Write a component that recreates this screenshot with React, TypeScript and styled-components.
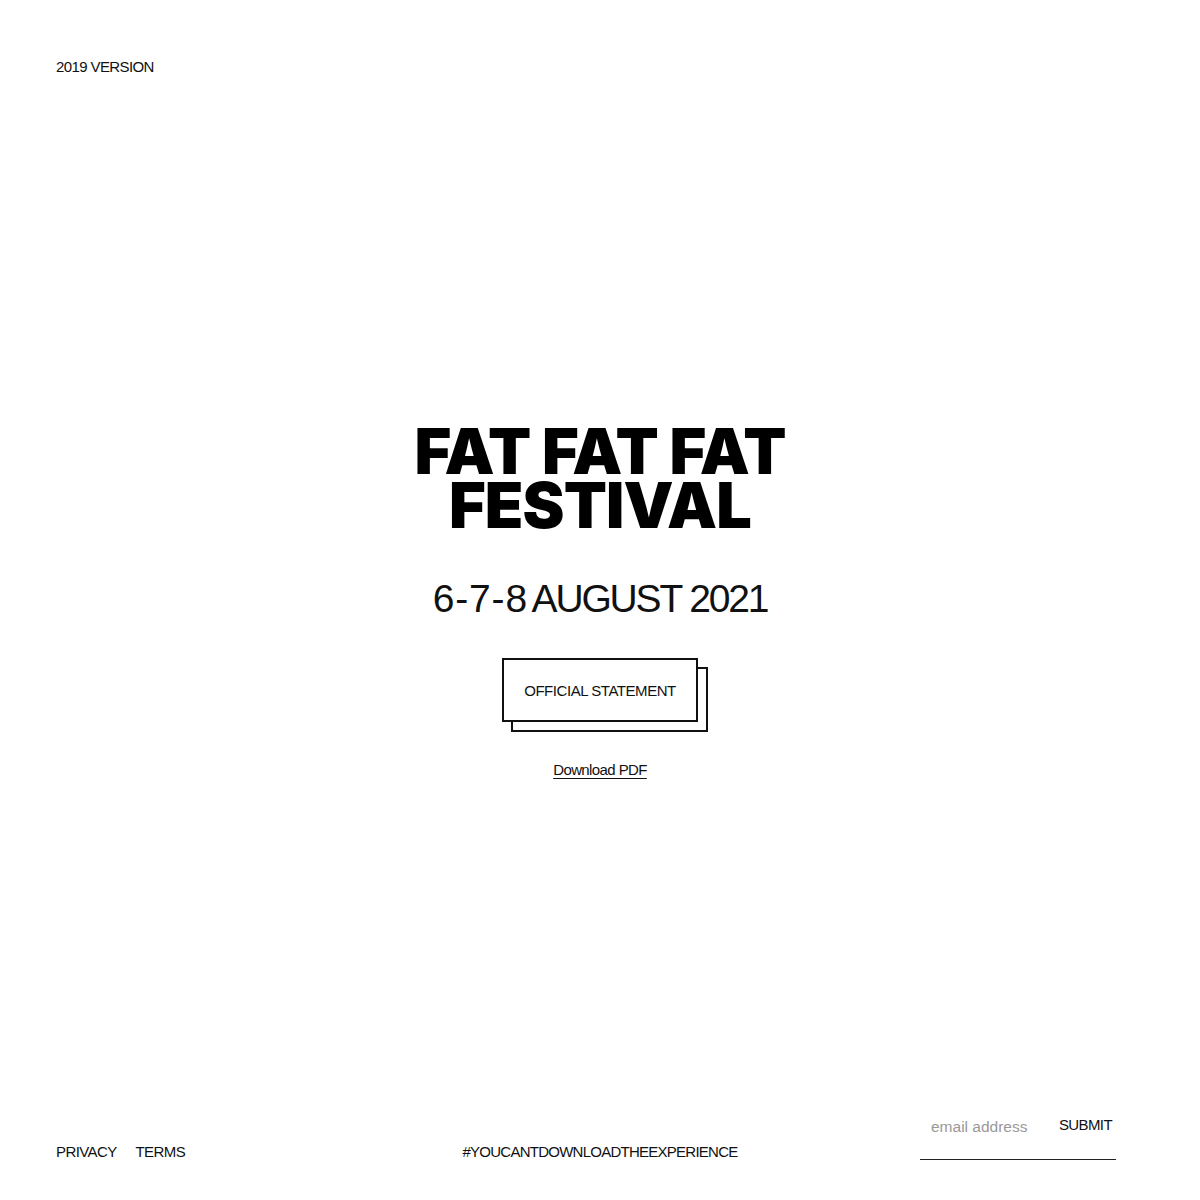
import React, {useState} from 'react';
import styled, {createGlobalStyle} from 'styled-components';

const GlobalStyle = createGlobalStyle`
    html, body {
        margin: 0;
        padding: 0;
        background: #ffffff;
    }
    body {
        font-family: "Liberation Sans", Arial, sans-serif;
        color: #111111;
        -webkit-font-smoothing: antialiased;
    }
    * {
        box-sizing: border-box;
    }
`;

const Page = styled.div`
    min-height: 100vh;
    display: flex;
    flex-direction: column;
`;

const Header = styled.header`
    padding: 57px 56px 0;
`;

const SmallLink = styled.a<{$underline?: boolean}>`
    font-size: 15px;
    line-height: 20px;
    letter-spacing: -0.04em;
    color: #111111;
    text-decoration: ${({$underline}) => ($underline ? 'underline' : 'none')};
    text-underline-offset: 3px;
    cursor: pointer;
`;

const Main = styled.main`
    flex: 1;
    display: flex;
    flex-direction: column;
    align-items: center;
    justify-content: center;
    padding-top: 10px;
`;

const Title = styled.h1`
    margin: 0;
    font-family: Inter, "Liberation Sans", sans-serif;
    font-weight: 900;
    font-size: 63px;
    line-height: 54px;
    letter-spacing: -0.014em;
    text-align: center;
    color: #000000;
`;

const Dates = styled.h2`
    margin: 45px 0 0;
    font-weight: 400;
    font-size: 39px;
    line-height: 44px;
    letter-spacing: -0.055em;
    color: #111111;
`;

const Dash = styled.span`
    margin: 0 3px;
`;

const StatementWrap = styled.div`
    position: relative;
    margin-top: 37px;
`;

const StatementShadow = styled.div`
    position: absolute;
    left: 9px;
    top: 9px;
    right: -10px;
    bottom: -10px;
    border: 2px solid #111111;
    background: #ffffff;
`;

const StatementButton = styled.button`
    position: relative;
    display: block;
    width: 196px;
    height: 64px;
    border: 2px solid #111111;
    background: #ffffff;
    font-family: "Liberation Sans", Arial, sans-serif;
    font-size: 15px;
    letter-spacing: -0.03em;
    color: #111111;
    cursor: pointer;
`;

const DownloadRow = styled.div`
    margin-top: 38px;
`;

const Footer = styled.footer`
    display: grid;
    grid-template-columns: 1fr auto 1fr;
    align-items: end;
    padding: 0 56px 38px;
`;

const FooterLinks = styled.nav`
    display: flex;
    gap: 19px;
`;

const Hashtag = styled.span`
    font-size: 15px;
    line-height: 20px;
    letter-spacing: -0.05em;
    color: #111111;
`;

const SignupForm = styled.form`
    justify-self: end;
    margin-right: 28px;
    margin-bottom: 2px;
    width: 196px;
    display: flex;
    align-items: center;
    justify-content: space-between;
    padding: 0 4px 22px 11px;
    border-bottom: 1.5px solid #222222;
`;

const EmailInput = styled.input`
    width: 110px;
    border: none;
    outline: none;
    padding: 0;
    font-family: "Liberation Sans", Arial, sans-serif;
    font-size: 15.5px;
    line-height: 20px;
    color: #111111;
    background: transparent;
    &::placeholder {
        color: #999999;
    }
`;

const SubmitButton = styled.button`
    border: none;
    background: transparent;
    padding: 0;
    margin-top: -4px;
    font-family: "Liberation Sans", Arial, sans-serif;
    font-size: 15px;
    line-height: 20px;
    letter-spacing: -0.04em;
    color: #111111;
    cursor: pointer;
`;

export default function App() {
    const [email, setEmail] = useState('');

    const handleSubmit = (e: React.FormEvent) => {
        e.preventDefault();
        setEmail('');
    };

    return (
        <Page>
            <GlobalStyle/>
            <Header>
                <SmallLink>2019 VERSION</SmallLink>
            </Header>
            <Main>
                <Title>
                    FAT FAT FAT<br/>FESTIVAL
                </Title>
                <Dates>6<Dash>-</Dash>7<Dash>-</Dash>8 AUGUST 2021</Dates>
                <StatementWrap>
                    <StatementShadow/>
                    <StatementButton type="button">OFFICIAL STATEMENT</StatementButton>
                </StatementWrap>
                <DownloadRow>
                    <SmallLink $underline>Download PDF</SmallLink>
                </DownloadRow>
            </Main>
            <Footer>
                <FooterLinks>
                    <SmallLink>PRIVACY</SmallLink>
                    <SmallLink>TERMS</SmallLink>
                </FooterLinks>
                <Hashtag>#YOUCANTDOWNLOADTHEEXPERIENCE</Hashtag>
                <SignupForm onSubmit={handleSubmit}>
                    <EmailInput
                        type="email"
                        placeholder="email address"
                        value={email}
                        onChange={e => setEmail(e.target.value)}
                    />
                    <SubmitButton type="submit">SUBMIT</SubmitButton>
                </SignupForm>
            </Footer>
        </Page>
    );
}
